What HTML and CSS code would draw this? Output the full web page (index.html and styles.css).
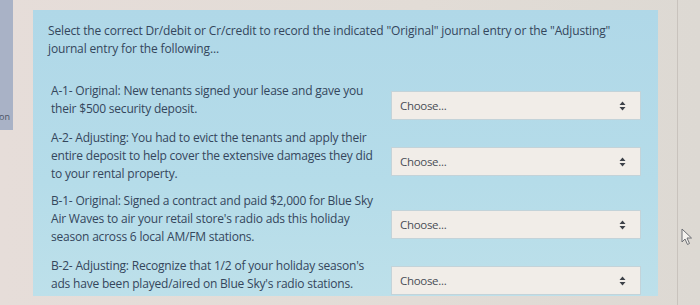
FILE: index.html
```html
<!DOCTYPE html>
<html>
<head>
<meta charset="utf-8">
<link rel="stylesheet" href="styles.css">
</head>
<body>
<div class="screen">
  <aside class="rail"><span class="rail-text">on</span></aside>
  <main class="panel">
    <p class="intro">Select the correct Dr/debit or Cr/credit to record the indicated "Original" journal entry or the "Adjusting" journal entry for the following...</p>
    <div class="items">
      <div class="item">
        <div class="label">A-1- Original: New tenants signed your lease and gave you their $500 security deposit.</div>
        <div class="select"><span>Choose...</span><svg class="arrows" width="7" height="10" viewBox="0 0 7 10"><path d="M3.5 0.5 L6.5 4 L0.5 4 Z M3.5 9.5 L6.5 6 L0.5 6 Z" fill="#3d4148"/></svg></div>
      </div>
      <div class="item">
        <div class="label">A-2- Adjusting: You had to evict the tenants and apply their entire deposit to help cover the extensive damages they did to your rental property.</div>
        <div class="select"><span>Choose...</span><svg class="arrows" width="7" height="10" viewBox="0 0 7 10"><path d="M3.5 0.5 L6.5 4 L0.5 4 Z M3.5 9.5 L6.5 6 L0.5 6 Z" fill="#3d4148"/></svg></div>
      </div>
      <div class="item">
        <div class="label">B-1- Original: Signed a contract and paid $2,000 for Blue Sky Air Waves to air your retail store's radio ads this holiday season across 6 local AM/FM stations.</div>
        <div class="select"><span>Choose...</span><svg class="arrows" width="7" height="10" viewBox="0 0 7 10"><path d="M3.5 0.5 L6.5 4 L0.5 4 Z M3.5 9.5 L6.5 6 L0.5 6 Z" fill="#3d4148"/></svg></div>
      </div>
      <div class="item">
        <div class="label">B-2- Adjusting: Recognize that 1/2 of your holiday season's ads have been played/aired on Blue Sky's radio stations.</div>
        <div class="select"><span>Choose...</span><svg class="arrows" width="7" height="10" viewBox="0 0 7 10"><path d="M3.5 0.5 L6.5 4 L0.5 4 Z M3.5 9.5 L6.5 6 L0.5 6 Z" fill="#3d4148"/></svg></div>
      </div>
    </div>
  </main>
  <div class="gutter"><div class="vline"></div></div>
  <svg class="cursor" width="12" height="18" viewBox="0 0 12 18"><path d="M1 1 L1 14 L4 11 L6.5 16.5 L8.5 15.5 L6 10 L10.5 10 Z" fill="#f4f2ee" stroke="#6d6f74" stroke-width="1" stroke-linejoin="round"/></svg>
</div>
</body>
</html>
```

FILE: styles.css
```css
html, body {
  margin: 0;
  padding: 0;
}
body {
  width: 700px;
  height: 305px;
  overflow: hidden;
  background: #e4ddd8;
  font-family: "Open Sans", "Noto Sans", sans-serif;
}
.screen {
  position: relative;
  display: flex;
  align-items: flex-start;
  height: 305px;
  background: linear-gradient(90deg, #e6ddd9 0%, #e2dcd6 60%, #ddd9d3 100%);
}
.rail {
  width: 13px;
  height: 130px;
  background: #a9b2c6;
  flex-shrink: 0;
  display: flex;
  align-items: flex-start;
  overflow: hidden;
}
.rail-text {
  margin-top: 112px;
  margin-left: -1px;
  font-size: 9px;
  color: #4b5262;
  line-height: 10px;
}
.panel {
  margin-left: 20px;
  margin-top: 10px;
  width: 625px;
  height: 286px;
  box-sizing: border-box;
  padding: 12px 18px 0 15px;
  background: linear-gradient(180deg, #b0d8e8 0%, #b5dce9 60%, #bde0ea 100%);
  color: #34465c;
  flex-shrink: 0;
}
.intro {
  margin: 0;
  font-size: 12px;
  line-height: 18px;
  letter-spacing: -0.15px;
}
.items {
  margin-top: 22px;
  padding-left: 3px;
  display: flex;
  flex-direction: column;
  gap: 9px;
}
.item {
  display: grid;
  grid-template-columns: 325px 250px;
  column-gap: 15px;
  align-items: center;
}
.label {
  font-size: 12px;
  line-height: 18px;
  letter-spacing: -0.2px;
}
.select {
  margin-top: 11px;
  height: 29px;
  box-sizing: border-box;
  background: #f1ede8;
  border: 1px solid #c3d3d9;
  display: flex;
  align-items: center;
  justify-content: space-between;
  padding: 0 14px 0 8px;
  font-size: 11.5px;
  color: #4a4e56;
  letter-spacing: -0.3px;
}
.arrows {
  display: block;
}
.gutter {
  margin-left: 19px;
  height: 305px;
  flex: 1;
}
.vline {
  width: 1px;
  height: 305px;
  background: #c9c3bd;
}
.cursor {
  position: absolute;
  left: 681px;
  top: 228px;
}
```
